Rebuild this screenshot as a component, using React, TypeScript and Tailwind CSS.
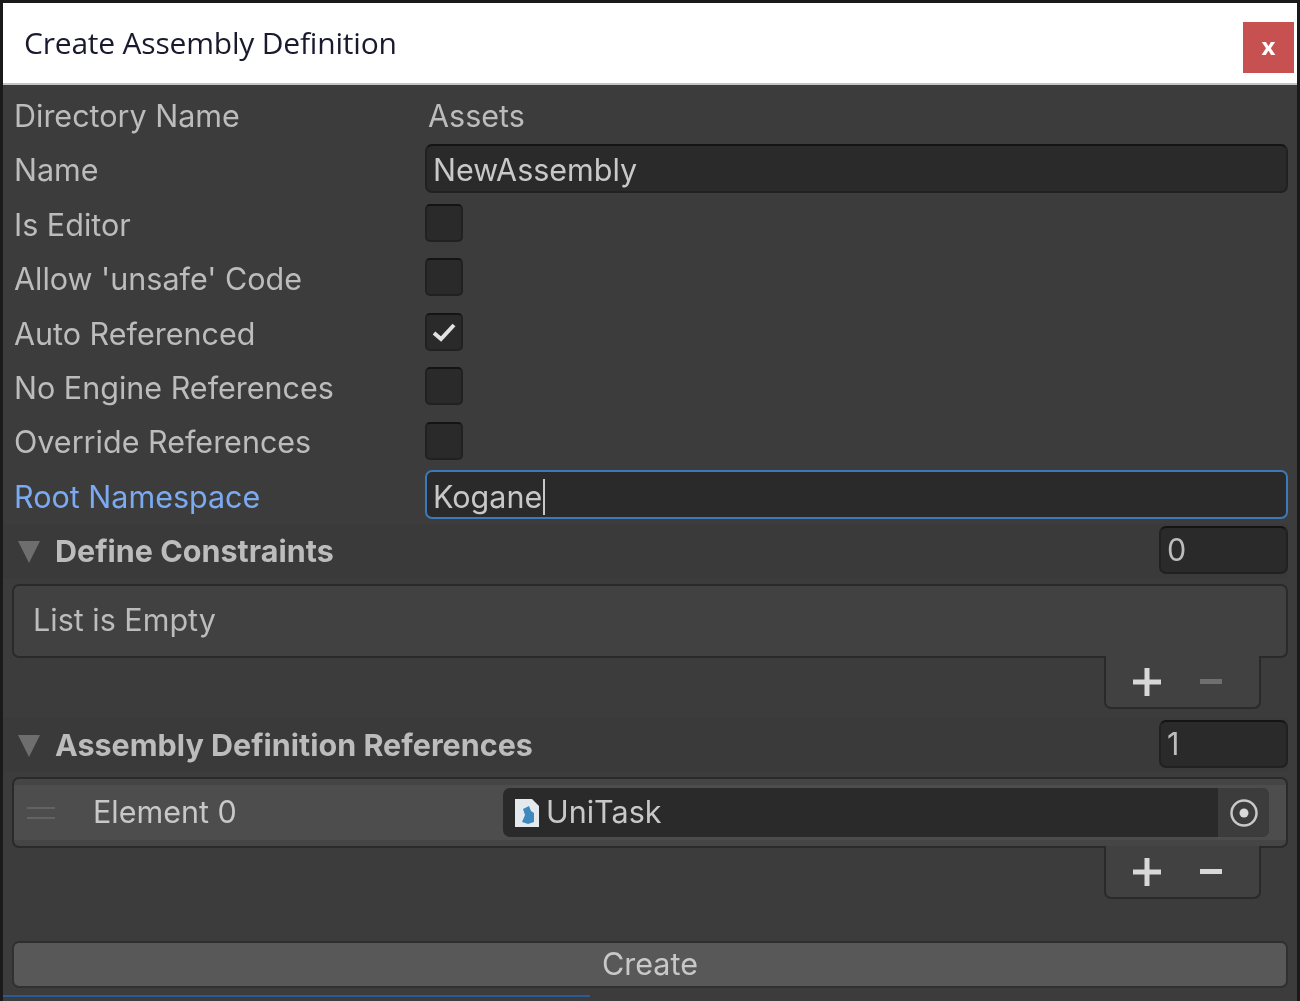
const labelFont = "font-['Inter','Liberation_Sans',sans-serif]"

function Row({ label, blue, children }: { label: string; blue?: boolean; children?: React.ReactNode }) {
  return (
    <div className="flex h-[54.4px] items-center">
      <div className={`w-[422px] pl-[11px] text-[30.5px] leading-none ${blue ? 'text-[#7baaf0]' : 'text-[#bcbcbc]'}`}>{label}</div>
      <div className="flex-1 pb-[4px]">{children}</div>
    </div>
  )
}

function TextField({ value, focused }: { value: string; focused?: boolean }) {
  return (
    <div
      className={`flex h-[49px] items-center rounded-[7px] bg-[#2a2a2a] pl-[6px] pt-[4px] text-[30.5px] leading-none text-[#c8c8c8] ${
        focused ? 'border-2 border-[#3a79bb]' : 'border-2 border-[#212121] border-t-[#141414]'
      }`}
    >
      {value}
      {focused && <span className="ml-[1px] h-[36px] w-[2px] bg-[#c8c8c8]" />}
    </div>
  )
}

function Checkbox({ checked }: { checked?: boolean }) {
  return (
    <div className="flex h-[38px] w-[38px] items-center justify-center rounded-[5px] border-2 border-[#212121] border-t-[#141414] bg-[#2a2a2a]">
      {checked && (
        <svg width="26" height="22" viewBox="0 0 26 22" fill="none">
          <path d="M3 12 L10 18 L23 4" stroke="#e2e2e2" strokeWidth="4" />
        </svg>
      )}
    </div>
  )
}

function SectionHeader({ title, count }: { title: string; count: string }) {
  return (
    <div className="flex h-[54px] items-start bg-[#3a3a3a] pl-[14px]">
      <svg width="24" height="22" viewBox="0 0 24 22" className="mt-[17px]">
        <path d="M1 0 H23 L12 22 Z" fill="#6e6e6e" />
      </svg>
      <div className="ml-[14px] mt-[12px] flex-1 text-[30.5px] font-bold leading-none text-[#bcbcbc]">{title}</div>
      <div className="mt-[2px] flex h-[48px] w-[129px] items-center rounded-[7px] border-2 border-[#212121] border-t-[#141414] bg-[#2a2a2a] pl-[6px] text-[30.5px] leading-none text-[#bcbcbc]">
        {count}
      </div>
    </div>
  )
}

function ListFooter({ minusEnabled }: { minusEnabled?: boolean }) {
  return (
    <div className="relative z-10 mr-[27px] -mt-[2px] ml-auto flex h-[53px] w-[157px] items-center rounded-b-[7px] border-2 border-t-0 border-[#2a2a2a] bg-[#414141] pl-[27px]">
      <svg width="28" height="28" viewBox="0 0 28 28">
        <path d="M0 14 H28 M14 0 V28" stroke="#d8d8d8" strokeWidth="5" />
      </svg>
      <svg width="22" height="5" viewBox="0 0 22 5" className="ml-[39px]">
        <path d="M0 2.5 H22" stroke={minusEnabled ? '#d8d8d8' : '#6f6f6f'} strokeWidth="5" />
      </svg>
    </div>
  )
}

export default function App() {
  return (
    <div className={`flex h-[1001px] w-[1300px] flex-col overflow-hidden bg-[#1a1a1a] px-[3px] pt-[3px] blur-[0.6px] ${labelFont}`}>
      <div className="flex h-[82px] shrink-0 justify-between border-b-2 border-[#c4c4c4] bg-white">
        <div className="pl-[21px] pt-[20px] font-['Open_Sans',sans-serif] text-[30px] leading-[40px] tracking-[-0.2px] text-[#1a1a2e]">
          Create Assembly Definition
        </div>
        <div className="mr-[3px] mt-[19px] flex h-[51px] w-[51px] items-center justify-center bg-[#c75050] pb-[4px] font-['Open_Sans',sans-serif] text-[24px] font-bold leading-none text-white">
          x
        </div>
      </div>

      <div className="flex flex-1 flex-col bg-[#3c3c3c] pr-[9px] pt-[4px]">
        <Row label="Directory Name">
          <div className="pl-[3px] pt-[4px] text-[30.5px] leading-none text-[#bcbcbc]">Assets</div>
        </Row>
        <Row label="Name">
          <TextField value="NewAssembly" />
        </Row>
        <Row label="Is Editor">
          <Checkbox />
        </Row>
        <Row label="Allow 'unsafe' Code">
          <Checkbox />
        </Row>
        <Row label="Auto Referenced">
          <Checkbox checked />
        </Row>
        <Row label="No Engine References">
          <Checkbox />
        </Row>
        <Row label="Override References">
          <Checkbox />
        </Row>
        <Row label="Root Namespace" blue>
          <TextField value="Kogane" focused />
        </Row>

        <SectionHeader title="Define Constraints" count="0" />
        <div className="ml-[9px] mt-[6px] flex h-[74px] shrink-0 items-center rounded-[7px] border-2 border-[#2a2a2a] bg-[#414141] pb-[2px] pl-[19px] text-[30.5px] leading-none text-[#bcbcbc]">
          List is Empty
        </div>
        <ListFooter />

        <div className="mt-[9px]">
          <SectionHeader title="Assembly Definition References" count="1" />
        </div>
        <div className="ml-[9px] mt-[5px] flex h-[71px] shrink-0 flex-col justify-center rounded-[7px] border-2 border-[#2a2a2a] bg-[#454545]">
          <div className="flex h-[55px] items-center bg-[#4d4d4d] pr-[17px]">
            <svg width="28" height="14" viewBox="0 0 28 14" className="ml-[13px]">
              <path d="M0 2 H28 M0 12 H28" stroke="#636363" strokeWidth="2" />
            </svg>
            <div className="ml-[38px] w-[410px] text-[30.5px] leading-none text-[#c8c8c8]">Element 0</div>
            <div className="flex h-[49px] flex-1 items-center overflow-hidden rounded-[7px] bg-[#2a2a2a] pl-[11px] text-[30.5px] leading-none text-[#c8c8c8]">
              <svg width="26" height="30" viewBox="0 0 26 30">
                <path d="M1 1 H18 L25 8 V29 H1 Z" fill="#e4e9ee" />
                <path d="M9 11 L15 8 L17 13 L20 15 V24 L14 26 L8 24 L11 17 Z" fill="#3f88bf" />
              </svg>
              <span className="ml-[6px] flex-1">UniTask</span>
              <div className="flex h-full w-[51px] items-center justify-center bg-[#3c3c3c]">
                <svg width="30" height="30" viewBox="0 0 30 30" fill="none">
                  <circle cx="15" cy="15" r="12.5" stroke="#c8c8c8" strokeWidth="2.5" />
                  <circle cx="15" cy="15" r="4.5" fill="#d8d8d8" />
                </svg>
              </div>
            </div>
          </div>
        </div>
        <ListFooter minusEnabled />

        <button className="ml-[9px] mt-[42px] flex h-[47px] shrink-0 items-center justify-center rounded-[7px] border-2 border-[#303030] border-t-[#2e2e2e] bg-[#585858] text-[30.5px] leading-none text-[#c8c8c8]">
          Create
        </button>
        <div className="-mr-[9px] mt-[7px] flex h-[2px] shrink-0">
          <div className="h-full w-[587px] bg-[#2a5a9a]" />
        </div>
      </div>
    </div>
  )
}
